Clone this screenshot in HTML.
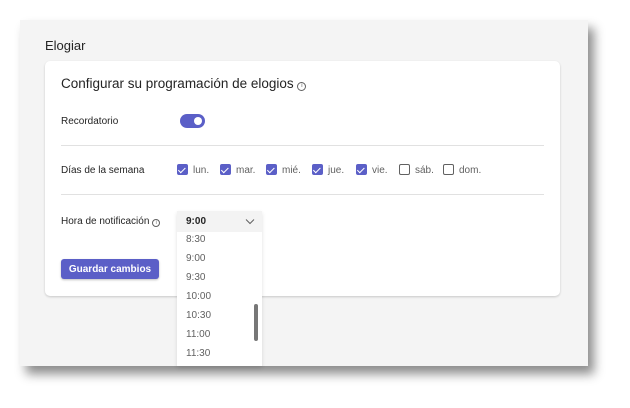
<!DOCTYPE html>
<html><head><meta charset="utf-8"><style>
*{margin:0;padding:0;box-sizing:border-box}
body{width:630px;height:408px;background:#fff;font-family:"Liberation Sans",sans-serif;position:relative;overflow:hidden;color:#242424}
.panel{position:absolute;left:20px;top:20px;width:568px;height:346px;background:#f4f4f4;box-shadow:6px 8px 10px rgba(0,0,0,.45)}
.card{position:absolute;left:45px;top:61px;width:515px;height:235px;background:#fff;border-radius:5px;box-shadow:0 1px 2px rgba(0,0,0,.18)}
.a{position:absolute;white-space:nowrap}
.hr{position:absolute;left:61px;width:483px;height:1px;background:#e1e1e1}
.cb{position:absolute;top:164px;width:11px;height:11px;border-radius:2px;background:#5b5fc7}
.cb:after{content:"";position:absolute;left:3px;top:1.5px;width:3px;height:5.5px;border:solid #fff;border-width:0 1.2px 1.2px 0;transform:rotate(45deg)}
.cb.off{background:#fff;border:1px solid #616161}.cb.off:after{display:none}
.dl{position:absolute;top:165px;font-size:10px;color:#616161}
.it{position:absolute;left:186px;font-size:10px;color:#616161}
.info{display:inline-block;border:1px solid #616161;border-radius:50%;text-align:center;color:#616161}
</style></head><body>
<div class="panel"></div>
<div class="a" style="left:45px;top:38px;font-size:13px">Elogiar</div>
<div class="card"></div>
<div class="a" style="left:61px;top:76px;font-size:13.5px">Configurar su programación de elogios <span class="info" style="width:9px;height:9px;font-size:6px;line-height:7px;vertical-align:1px">i</span></div>
<div class="a" style="left:61px;top:116px;font-size:10px">Recordatorio</div>
<div class="a" style="left:180px;top:114px;width:25px;height:14px;border-radius:7px;background:#5b5fc7"><div style="position:absolute;right:3px;top:3px;width:8px;height:8px;border-radius:50%;background:#fff"></div></div>
<div class="hr" style="top:145px"></div>
<div class="a" style="left:61px;top:165px;font-size:10px">Días de la semana</div>
<div class="cb" style="left:177px"></div><div class="dl" style="left:193px">lun.</div>
<div class="cb" style="left:220px"></div><div class="dl" style="left:236px">mar.</div>
<div class="cb" style="left:266px"></div><div class="dl" style="left:282px">mié.</div>
<div class="cb" style="left:312px"></div><div class="dl" style="left:328px">jue.</div>
<div class="cb" style="left:356px"></div><div class="dl" style="left:372px">vie.</div>
<div class="cb off" style="left:399px"></div><div class="dl" style="left:415px">sáb.</div>
<div class="cb off" style="left:443px"></div><div class="dl" style="left:459px">dom.</div>
<div class="hr" style="top:194px"></div>
<div class="a" style="left:61px;top:216px;font-size:10px">Hora de notificación <span class="info" style="width:8px;height:8px;font-size:5px;line-height:6px;vertical-align:0">i</span></div>
<div class="a" style="left:61px;top:259px;width:98px;height:20px;background:#5b5fc7;border-radius:3px;color:#fff;font-size:10px;font-weight:bold;text-align:center;line-height:21px;box-shadow:0 1px 2px rgba(0,0,0,.25)">Guardar cambios</div>
<div class="a" style="left:177px;top:211px;width:85px;height:155px;background:#fff;box-shadow:0 2px 4px rgba(0,0,0,.12)"></div>
<div class="a" style="left:177px;top:211px;width:85px;height:21px;background:#f3f3f3"></div>
<div class="a" style="left:186px;top:216px;font-size:10px;font-weight:bold">9:00</div>
<svg class="a" style="left:245px;top:218px" width="10" height="7"><path d="M1 1.5 L5 5.5 L9 1.5" fill="none" stroke="#616161" stroke-width="1"/></svg>
<div class="it" style="top:234px">8:30</div>
<div class="it" style="top:253px">9:00</div>
<div class="it" style="top:272px">9:30</div>
<div class="it" style="top:291px">10:00</div>
<div class="it" style="top:310px">10:30</div>
<div class="it" style="top:329px">11:00</div>
<div class="it" style="top:348px">11:30</div>
<div class="a" style="left:254px;top:304px;width:4px;height:37px;border-radius:2px;background:#777"></div>
</body></html>
